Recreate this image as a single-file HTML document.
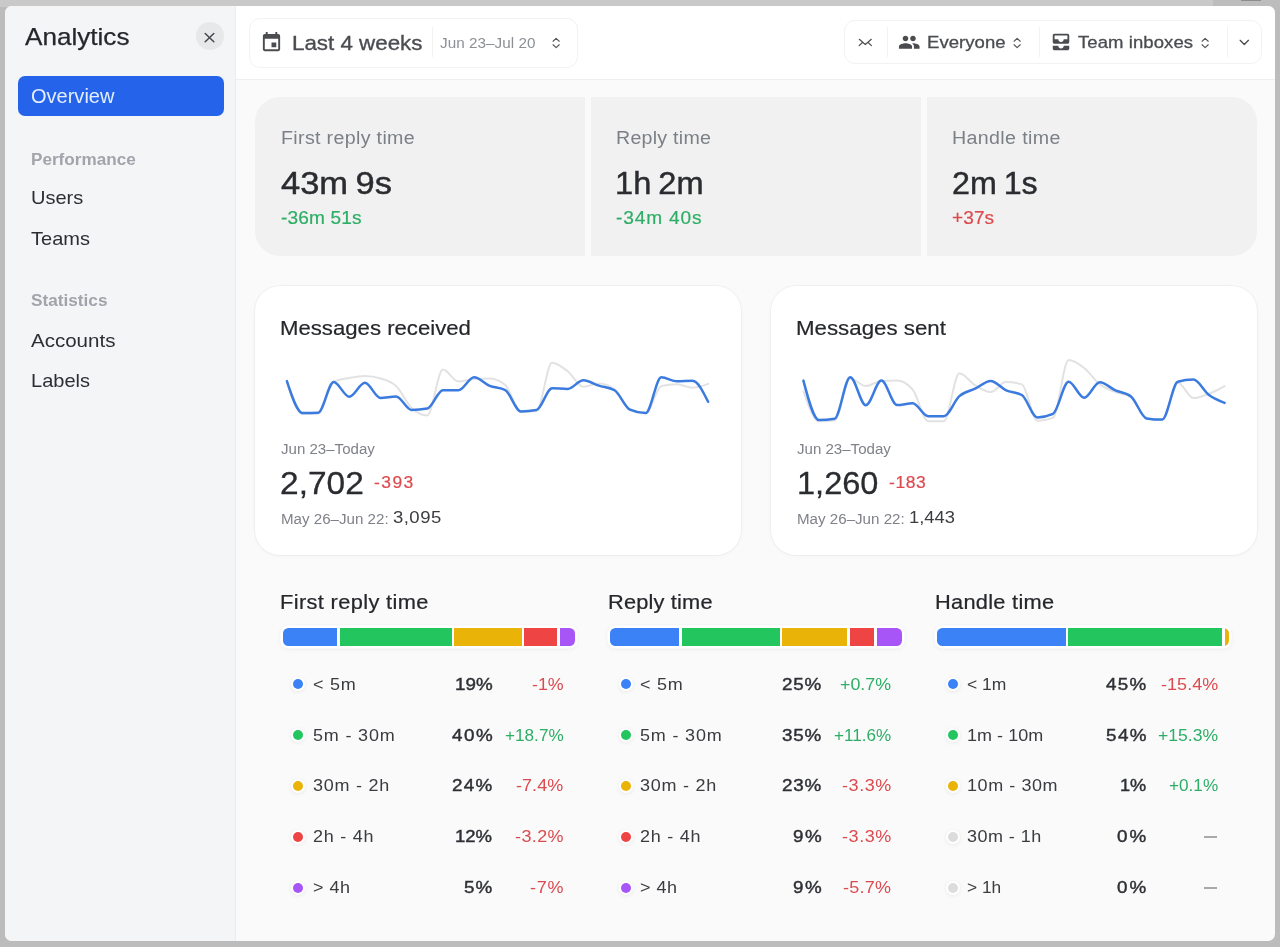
<!DOCTYPE html>
<html lang="en"><head><meta charset="utf-8"><title>Analytics</title>
<style>
*{box-sizing:border-box}
html,body{margin:0;padding:0}
body{width:1280px;height:947px;overflow:hidden;position:relative;background:#bcbcbc;font-family:"Liberation Sans", Arial, sans-serif;-webkit-font-smoothing:antialiased}
.topband{position:absolute;left:0;top:0;width:1280px;height:7px;background:#c9c9c9}
.topband i{position:absolute;left:1213px;top:0;width:67px;height:7px;background:#bdbdbd}
.topband b{position:absolute;left:1241px;top:0;width:20px;height:1px;background:#8d8d8d}
.window{position:absolute;left:5px;top:6px;width:1270px;height:935px;border-radius:7px;overflow:hidden;background:#fafafa;will-change:transform}
.abs,.t,.chart,.ud,svg.ic{position:absolute}
.t{white-space:pre;line-height:1;transform-origin:0 0;margin:0;font-weight:400;text-decoration:none;display:block}
.sidebar{position:absolute;left:0;top:0;width:231px;height:935px;background:#f4f5f7;border-right:1px solid #ececee}
.close{position:absolute;left:190.5px;top:16px;width:28px;height:28px;border-radius:50%;background:#e7e8ea}
.navsel{position:absolute;left:13px;top:70px;width:206px;height:40px;border-radius:7px;background:#2563eb}
.header{position:absolute;left:231px;top:0;width:1039px;height:74px;background:#fff;border-bottom:1px solid #efefef}
.pill{position:absolute;border:1px solid #f2f2f2;border-radius:11px;background:#fff}
.vr{position:absolute;width:1px;background:#f2f2f2}
.card{position:absolute;top:91px;width:330px;height:159px;background:#f1f1f1}
.panel{position:absolute;top:280px;width:486px;height:269px;border-radius:25px;background:#fff;box-shadow:0 0 0 1px rgba(0,0,0,.03),0 1px 4px rgba(0,0,0,.03)}
.col{position:absolute;top:570px;width:300px;height:360px}
.bar{position:absolute;top:52px;height:18px;width:292px;display:flex;gap:2.7px;border-radius:5.5px;overflow:hidden;box-shadow:0 0 0 2.5px #fff,0 1px 5px 2.5px rgba(0,0,0,.055);background:#fff}
.bar i{display:block;height:100%}
.dot{position:absolute;width:10px;height:10px;border-radius:50%;box-shadow:0 0 0 2px #fff,0 1px 4px 2px rgba(0,0,0,.07)}
.dash{position:absolute;width:13px;height:1.5px;background:#a9a9a9}
</style></head><body>
<div class="topband"><i></i><b></b></div>
<div class="window">

<aside class="sidebar">
<h1 class="t" style="left:20.3px;top:19.3px;font-size:24px;color:#25272b;-webkit-text-stroke:0.25px #25272b;transform:scaleX(1.088);">Analytics</h1>
<div class="close" role="button" aria-label="Close"><svg class="ic" style="left:8.6px;top:9.5px" width="11" height="11" viewBox="0 0 11 11"><path d="M1.2 1.5 9.8 9.7M9.8 1.5 1.2 9.7" stroke="#45474c" stroke-width="1.5" stroke-linecap="round"/></svg></div>
<nav><div class="navsel"></div>
<a class="t nav" style="left:25.7px;top:81.1px;font-size:19.3px;color:#e3efff;transform:scaleX(1.038);">Overview</a>
<h2 class="t sec" style="left:26.1px;top:145.6px;font-size:16px;color:#a1a4aa;font-weight:700;transform:scaleX(1.070);">Performance</h2>
<a class="t nav" style="left:26.0px;top:182.3px;font-size:19px;color:#2c2e33;transform:scaleX(1.054);">Users</a>
<a class="t nav" style="left:26.0px;top:222.9px;font-size:19px;color:#2c2e33;transform:scaleX(1.054);">Teams</a>
<h2 class="t sec" style="left:26.1px;top:287.1px;font-size:16px;color:#a1a4aa;font-weight:700;transform:scaleX(1.075);">Statistics</h2>
<a class="t nav" style="left:26.0px;top:324.5px;font-size:19px;color:#2c2e33;transform:scaleX(1.080);">Accounts</a>
<a class="t nav" style="left:26.0px;top:365.0px;font-size:19px;color:#2c2e33;transform:scaleX(1.054);">Labels</a>
</nav></aside>
<header class="header">
<div class="pill" style="left:13px;top:12px;width:329px;height:50px"></div>
<div class="pill" style="left:608px;top:14px;width:418px;height:44px"></div>
<div class="vr" style="left:196px;top:21px;height:30px"></div>
<div class="vr" style="left:651px;top:21px;height:30px"></div>
<div class="vr" style="left:803px;top:21px;height:30px"></div>
<div class="vr" style="left:991px;top:21px;height:30px"></div>
<svg class="ic" style="left:23.9px;top:25.0px" width="23" height="23" viewBox="0 0 24 24"><path fill="#4a4c50" d="M17 12h-5v5h5v-5zM16 1v2H8V1H6v2H5c-1.11 0-1.99.9-1.99 2L3 19c0 1.1.89 2 2 2h14c1.1 0 2-.9 2-2V5c0-1.1-.9-2-2-2h-1V1h-2zm3 18H5V8h14v11z"/></svg>
<svg class="ud" style="left:315.8px;top:30.5px" width="8.3" height="12" viewBox="0 0 9 13"><path d="M1.2 4.6 4.5 1.4 7.8 4.6M1.2 8.4 4.5 11.6 7.8 8.4" fill="none" stroke="#55575b" stroke-width="1.25" stroke-linecap="round" stroke-linejoin="round"/></svg>
<svg class="ic" style="left:622.3px;top:31.9px" width="14.6" height="9.1" viewBox="0 0 16 10"><path d="M1.4 1.4 8 7.2 14.6 1.4M1.2 8.4 4.6 5.2M14.8 8.4 11.4 5.2" fill="none" stroke="#4a4c50" stroke-width="1.25" stroke-linecap="round" stroke-linejoin="round"/></svg>
<svg class="ic" style="left:662.4px;top:25.3px" width="22.5" height="22.5" viewBox="0 0 24 24"><path fill="#4a4c50" d="M16 11c1.66 0 2.99-1.34 2.99-3S17.66 5 16 5c-1.66 0-3 1.34-3 3s1.34 3 3 3zm-8 0c1.66 0 2.99-1.34 2.99-3S9.660 5 8 5C6.340 5 5 6.340 5 8s1.340 3 3 3zm0 2c-2.330 0-7 1.170-7 3.500V19h14v-2.500c0-2.330-4.670-3.500-7-3.500zm8 0c-.29 0-.62.020-.97.050 1.160.84 1.970 1.970 1.970 3.450V19h6v-2.500c0-2.330-4.670-3.500-7-3.500z"/></svg>
<svg class="ud" style="left:776.8px;top:30.6px" width="8.3" height="12" viewBox="0 0 9 13"><path d="M1.2 4.6 4.5 1.4 7.8 4.6M1.2 8.4 4.5 11.6 7.8 8.4" fill="none" stroke="#55575b" stroke-width="1.25" stroke-linecap="round" stroke-linejoin="round"/></svg>
<svg class="ic" style="left:813.8px;top:25.3px" width="22" height="22" viewBox="0 0 24 24"><path fill="#4a4c50" d="M19 3H5c-1.1 0-2 .9-2 2v7c0 1.1.9 2 2 2h14c1.1 0 2-.9 2-2V5c0-1.1-.9-2-2-2zm0 6h-4c0 1.62-1.38 3-3 3s-3-1.38-3-3H5V5h14v4zm-4 7h6v3c0 1.1-.9 2-2 2H5c-1.1 0-2-.9-2-2v-3h6c0 1.66 1.34 3 3 3s3-1.340 3-3z"/></svg>
<svg class="ud" style="left:964.6px;top:30.7px" width="8.3" height="12" viewBox="0 0 9 13"><path d="M1.2 4.6 4.5 1.4 7.8 4.6M1.2 8.4 4.5 11.6 7.8 8.4" fill="none" stroke="#55575b" stroke-width="1.25" stroke-linecap="round" stroke-linejoin="round"/></svg>
<svg class="ic" style="left:1003.2px;top:33.2px" width="10.6" height="7.1" viewBox="0 0 12 8"><path d="M1.3 1.5 6 6.2 10.700 1.500" fill="none" stroke="#4a4c50" stroke-width="1.500" stroke-linecap="round" stroke-linejoin="round"/></svg>
<span class="t" style="left:56.1px;top:26.2px;font-size:21px;color:#4a4c50;-webkit-text-stroke:0.35px #4a4c50;transform:scaleX(1.064);">Last 4 weeks</span>
<span class="t" style="left:203.7px;top:30.2px;font-size:14px;color:#8c8f94;letter-spacing:0.03px;transform:scaleX(1.090);">Jun 23–Jul 20</span>
<span class="t" style="left:691.3px;top:28.2px;font-size:17px;color:#4a4c50;letter-spacing:0.04px;-webkit-text-stroke:0.3px #4a4c50;transform:scaleX(1.090);">Everyone</span>
<span class="t" style="left:842.4px;top:28.2px;font-size:17px;color:#4a4c50;letter-spacing:0.06px;-webkit-text-stroke:0.3px #4a4c50;transform:scaleX(1.090);">Team inboxes</span>
</header>
<section>
<div class="card" style="left:250px;border-radius:25px 0 0 25px;">
<h3 class="t" style="left:25.8px;top:31.6px;font-size:18px;color:#7b7f86;letter-spacing:0.31px;transform:scaleX(1.090);">First reply time</h3>
<span class="t" style="left:26.2px;top:69.6px;font-size:32px;color:#2a2c30;word-spacing:-2px;-webkit-text-stroke:0.45px #2a2c30;transform:scaleX(1.078);">43m 9s</span>
<span class="t" style="left:26.4px;top:113.0px;font-size:17.5px;color:#2dae66;letter-spacing:0.15px;-webkit-text-stroke:0.2px #2dae66;transform:scaleX(1.090);">-36m 51s</span>
</div>
<div class="card" style="left:586px;">
<h3 class="t" style="left:24.8px;top:31.6px;font-size:18px;color:#7b7f86;letter-spacing:0.23px;transform:scaleX(1.090);">Reply time</h3>
<span class="t" style="left:23.8px;top:69.6px;font-size:32px;color:#2a2c30;word-spacing:-2px;-webkit-text-stroke:0.45px #2a2c30;transform:scaleX(1.019);">1h 2m</span>
<span class="t" style="left:25.4px;top:113.0px;font-size:17.5px;color:#2dae66;letter-spacing:0.79px;-webkit-text-stroke:0.2px #2dae66;transform:scaleX(1.090);">-34m 40s</span>
</div>
<div class="card" style="left:922px;border-radius:0 25px 25px 0;">
<h3 class="t" style="left:24.8px;top:31.6px;font-size:18px;color:#7b7f86;letter-spacing:0.33px;transform:scaleX(1.090);">Handle time</h3>
<span class="t" style="left:24.6px;top:69.6px;font-size:32px;color:#2a2c30;word-spacing:-2px;-webkit-text-stroke:0.45px #2a2c30;transform:scaleX(1.007);">2m 1s</span>
<span class="t" style="left:25.4px;top:113.0px;font-size:17.5px;color:#dc4a4e;letter-spacing:0.07px;-webkit-text-stroke:0.2px #dc4a4e;transform:scaleX(1.090);">+37s</span>
</div>
</section>
<section>
<div class="panel" style="left:250px">
<svg class="chart" style="left:0;top:54px" width="486" height="100" viewBox="0 0 486 100"><path d="M31.9 42.0C37.1 58.0 42.3 74.0 47.5 74.0C52.7 74.0 57.9 73.8 63.1 73.5C68.3 73.2 73.5 44.7 78.7 42.0C83.9 39.3 89.1 39.0 94.3 38.0C99.5 37.0 104.7 36.0 109.9 36.0C115.1 36.0 120.3 36.8 125.5 38.5C130.7 40.2 135.9 41.1 141.1 46.0C146.3 50.9 151.5 63.1 156.7 68.0C161.9 72.9 167.1 75.5 172.3 75.5C177.5 75.5 182.7 29.6 187.9 29.6C193.1 29.6 198.3 41.6 203.5 41.6C208.7 41.6 213.9 39.3 219.1 39.0C224.3 38.7 229.5 38.5 234.7 38.5C239.9 38.5 245.1 40.7 250.3 45.0C255.5 49.3 260.7 72.0 265.9 72.0C271.1 72.0 276.3 71.7 281.5 71.0C286.7 70.3 291.9 22.7 297.1 22.7C302.3 22.7 307.5 27.3 312.7 31.3C317.9 35.3 323.1 46.8 328.3 46.8C333.5 46.8 338.7 43.4 343.9 43.4C349.1 43.4 354.3 45.4 359.5 49.4C364.7 53.4 369.9 68.2 375.1 70.3C380.3 72.4 385.5 73.4 390.7 73.4C395.9 73.4 401.1 47.2 406.3 46.0C411.5 44.8 416.7 44.2 421.9 44.2C427.1 44.2 432.3 47.7 437.5 47.7C442.7 47.7 447.9 45.8 453.1 43.9" fill="none" stroke="#e2e2e2" stroke-width="2" stroke-linecap="round" stroke-linejoin="round"/><path d="M31.9 41.1C37.1 57.1 42.3 73.0 47.5 73.0C52.7 73.0 57.9 72.9 63.1 72.7C68.3 72.5 73.5 42.0 78.7 42.0C83.9 42.0 89.1 56.8 94.3 56.8C99.5 56.8 104.7 42.8 109.9 42.8C115.1 42.8 120.3 58.0 125.5 58.0C130.7 58.0 135.9 56.4 141.1 56.4C146.3 56.4 151.5 70.0 156.7 70.0C161.9 70.0 167.1 69.5 172.3 68.6C177.5 67.7 182.7 50.2 187.9 50.2C193.1 50.2 198.3 50.2 203.5 50.2C208.7 50.2 213.9 37.3 219.1 37.3C224.3 37.3 229.5 43.7 234.7 45.9C239.9 48.0 245.1 47.3 250.3 50.2C255.5 53.1 260.7 71.4 265.9 71.4C271.1 71.4 276.3 70.9 281.5 70.0C286.7 69.1 291.9 48.2 297.1 48.2C302.3 48.2 307.5 48.9 312.7 48.9C317.9 48.9 323.1 40.3 328.3 40.3C333.5 40.3 338.7 44.0 343.9 45.6C349.1 47.3 354.3 47.1 359.5 50.2C364.7 53.3 369.9 67.4 375.1 69.7C380.3 72.0 385.5 73.1 390.7 73.1C395.9 73.1 401.1 37.3 406.3 37.3C411.5 37.3 416.7 41.3 421.9 41.3C427.1 41.3 432.3 40.8 437.5 40.8C442.7 40.8 447.9 51.3 453.1 61.8" fill="none" stroke="#3b7be0" stroke-width="2.5" stroke-linecap="round" stroke-linejoin="round"/></svg>
<h2 class="t" style="left:25.4px;top:32.3px;font-size:20.5px;color:#25272b;-webkit-text-stroke:0.2px #25272b;transform:scaleX(1.081);">Messages received</h2>
<span class="t" style="left:25.7px;top:155.9px;font-size:14px;color:#7f8288;transform:scaleX(1.076);">Jun 23–Today</span>
<span class="t" style="left:25.0px;top:180.6px;font-size:32px;color:#2a2c30;-webkit-text-stroke:0.3px #2a2c30;transform:scaleX(1.047);">2,702</span>
<span class="t" style="left:119.1px;top:188.5px;font-size:16px;color:#dc4a4e;letter-spacing:1.35px;-webkit-text-stroke:0.2px #dc4a4e;transform:scaleX(1.090);">-393</span>
<span class="t" style="left:25.7px;top:225.5px;font-size:14px;color:#7f8288;transform:scaleX(1.080);">May 26–Jun 22:</span>
<span class="t" style="left:137.8px;top:223.0px;font-size:17px;color:#3a3c40;letter-spacing:0.42px;transform:scaleX(1.090);">3,095</span>
</div>
<div class="panel" style="left:766px">
<svg class="chart" style="left:0;top:54px" width="486" height="100" viewBox="0 0 486 100"><path d="M32.4 51.2C37.6 66.2 42.8 81.3 48.0 81.3C53.2 81.3 58.4 81.0 63.6 80.5C68.8 80.0 74.0 38.4 79.2 38.4C84.4 38.4 89.6 46.1 94.8 46.1C100.0 46.1 105.2 41.1 110.4 40.9C115.6 40.7 120.8 40.6 126.0 40.6C131.2 40.6 136.4 43.6 141.6 49.5C146.8 55.4 152.0 81.3 157.2 81.3C162.4 81.3 167.6 81.3 172.8 81.3C178.0 81.3 183.2 33.2 188.4 33.2C193.6 33.2 198.8 42.0 204.0 45.2C209.2 48.3 214.4 52.1 219.6 52.1C224.8 52.1 230.0 41.8 235.2 41.8C240.4 41.8 245.6 42.7 250.8 44.4C256.0 46.1 261.2 80.8 266.4 80.8C271.6 80.8 276.8 79.8 282.0 77.9C287.2 76.0 292.4 20.0 297.6 20.0C302.8 20.0 308.0 23.9 313.2 28.0C318.4 32.1 323.6 40.4 328.8 44.4C334.0 48.4 339.2 50.0 344.4 52.1C349.6 54.3 354.8 53.8 360.0 57.3C365.2 60.8 370.4 77.8 375.6 78.7C380.8 79.6 386.0 80.1 391.2 80.1C396.4 80.1 401.6 42.7 406.8 42.7C412.0 42.7 417.2 58.1 422.4 58.1C427.6 58.1 432.8 55.8 438.0 53.8C443.2 51.8 448.4 49.0 453.6 46.1" fill="none" stroke="#e2e2e2" stroke-width="2" stroke-linecap="round" stroke-linejoin="round"/><path d="M32.4 40.6C37.6 60.4 42.8 80.1 48.0 80.1C53.2 80.1 58.4 79.6 63.6 78.7C68.8 77.8 74.0 37.2 79.2 37.2C84.4 37.2 89.6 65.3 94.8 65.3C100.0 65.3 105.2 40.6 110.4 40.6C115.6 40.6 120.8 65.0 126.0 65.0C131.2 65.0 136.4 63.3 141.6 63.3C146.8 63.3 152.0 76.2 157.2 76.2C162.4 76.2 167.6 76.2 172.8 76.2C178.0 76.2 183.2 60.7 188.4 56.1C193.6 51.5 198.8 51.2 204.0 48.7C209.2 46.2 214.4 40.9 219.6 40.9C224.8 40.9 230.0 48.0 235.2 50.4C240.4 52.7 245.6 51.9 250.8 55.0C256.0 58.1 261.2 77.4 266.4 77.4C271.6 77.4 276.8 76.2 282.0 73.9C287.2 71.6 292.4 41.8 297.6 41.8C302.8 41.8 308.0 57.8 313.2 57.8C318.4 57.8 323.6 42.3 328.8 42.3C334.0 42.3 339.2 48.0 344.4 50.4C349.6 52.7 354.8 52.4 360.0 56.4C365.2 60.4 370.4 77.6 375.6 78.4C380.8 79.2 386.0 79.6 391.2 79.6C396.4 79.6 401.6 43.3 406.8 41.8C412.0 40.3 417.2 39.6 422.4 39.6C427.6 39.6 432.8 51.1 438.0 55.0C443.2 58.9 448.4 60.9 453.6 62.9" fill="none" stroke="#3b7be0" stroke-width="2.5" stroke-linecap="round" stroke-linejoin="round"/></svg>
<h2 class="t" style="left:25.4px;top:32.3px;font-size:20.5px;color:#25272b;-webkit-text-stroke:0.2px #25272b;transform:scaleX(1.087);">Messages sent</h2>
<span class="t" style="left:25.7px;top:155.9px;font-size:14px;color:#7f8288;transform:scaleX(1.076);">Jun 23–Today</span>
<span class="t" style="left:25.8px;top:180.6px;font-size:32px;color:#2a2c30;-webkit-text-stroke:0.3px #2a2c30;transform:scaleX(1.017);">1,260</span>
<span class="t" style="left:117.6px;top:188.5px;font-size:16px;color:#dc4a4e;letter-spacing:0.58px;-webkit-text-stroke:0.2px #dc4a4e;transform:scaleX(1.090);">-183</span>
<span class="t" style="left:25.7px;top:225.5px;font-size:14px;color:#7f8288;transform:scaleX(1.081);">May 26–Jun 22:</span>
<span class="t" style="left:138.0px;top:223.0px;font-size:17px;color:#3a3c40;transform:scaleX(1.078);">1,443</span>
</div>
</section>
<section>
<div class="col" style="left:270.3px">
<div class="bar" style="left:7.4px"><i style="background:#3b82f6;flex:54.6 1 0"></i><i style="background:#22c55e;flex:112.25 1 0"></i><i style="background:#eab308;flex:67.5 1 0"></i><i style="background:#ef4444;flex:32.75 1 0"></i><i style="background:#a855f7;flex:15 1 0"></i></div>
<i class="dot" style="left:18.0px;top:103.3px;background:#3b82f6"></i>
<i class="dot" style="left:18.0px;top:154.3px;background:#22c55e"></i>
<i class="dot" style="left:18.0px;top:205.1px;background:#eab308"></i>
<i class="dot" style="left:18.0px;top:255.9px;background:#ef4444"></i>
<i class="dot" style="left:18.0px;top:306.9px;background:#a855f7"></i>
<h2 class="t" style="left:5.1px;top:15.9px;font-size:20px;color:#25272b;letter-spacing:0.33px;-webkit-text-stroke:0.22px #25272b;transform:scaleX(1.090);">First reply time</h2>
<div class="row">
<span class="t" style="left:37.7px;top:99.5px;font-size:16.5px;color:#3a3c40;letter-spacing:0.69px;transform:scaleX(1.090);">&lt; 5m</span>
<b class="t" style="left:179.4px;top:99.5px;font-size:16.5px;color:#2e3035;letter-spacing:0.07px;-webkit-text-stroke:0.42px #2e3035;transform:scaleX(1.140);">19%</b>
<span class="t" style="left:256.7px;top:99.5px;font-size:16.5px;color:#dc4a4e;transform:scaleX(1.082);">-1%</span>
</div>
<div class="row">
<span class="t" style="left:37.7px;top:150.5px;font-size:16.5px;color:#3a3c40;letter-spacing:0.76px;transform:scaleX(1.090);">5m - 30m</span>
<b class="t" style="left:176.4px;top:150.5px;font-size:16.5px;color:#2e3035;letter-spacing:1.39px;-webkit-text-stroke:0.42px #2e3035;transform:scaleX(1.140);">40%</b>
<span class="t" style="left:229.7px;top:150.5px;font-size:16.5px;color:#2dae66;transform:scaleX(1.040);">+18.7%</span>
</div>
<div class="row">
<span class="t" style="left:37.7px;top:201.3px;font-size:16.5px;color:#3a3c40;letter-spacing:0.69px;transform:scaleX(1.090);">30m - 2h</span>
<b class="t" style="left:176.9px;top:201.3px;font-size:16.5px;color:#2e3035;letter-spacing:1.17px;-webkit-text-stroke:0.42px #2e3035;transform:scaleX(1.140);">24%</b>
<span class="t" style="left:241.2px;top:201.3px;font-size:16.5px;color:#dc4a4e;letter-spacing:0.06px;transform:scaleX(1.090);">-7.4%</span>
</div>
<div class="row">
<span class="t" style="left:37.7px;top:252.1px;font-size:16.5px;color:#3a3c40;letter-spacing:0.70px;transform:scaleX(1.090);">2h - 4h</span>
<b class="t" style="left:180.2px;top:252.1px;font-size:16.5px;color:#2e3035;-webkit-text-stroke:0.42px #2e3035;transform:scaleX(1.123);">12%</b>
<span class="t" style="left:239.9px;top:252.1px;font-size:16.5px;color:#dc4a4e;letter-spacing:0.36px;transform:scaleX(1.090);">-3.2%</span>
</div>
<div class="row">
<span class="t" style="left:37.7px;top:303.1px;font-size:16.5px;color:#3a3c40;letter-spacing:0.47px;transform:scaleX(1.090);">&gt; 4h</span>
<b class="t" style="left:188.9px;top:303.1px;font-size:16.5px;color:#2e3035;letter-spacing:0.98px;-webkit-text-stroke:0.42px #2e3035;transform:scaleX(1.140);">5%</b>
<span class="t" style="left:254.9px;top:303.1px;font-size:16.5px;color:#dc4a4e;letter-spacing:0.72px;transform:scaleX(1.090);">-7%</span>
</div>
</div>
<div class="col" style="left:597.5px">
<div class="bar" style="left:7.4px"><i style="background:#3b82f6;flex:68.75 1 0"></i><i style="background:#22c55e;flex:97.25 1 0"></i><i style="background:#eab308;flex:64 1 0"></i><i style="background:#ef4444;flex:24.5 1 0"></i><i style="background:#a855f7;flex:24.75 1 0"></i></div>
<i class="dot" style="left:18.0px;top:103.3px;background:#3b82f6"></i>
<i class="dot" style="left:18.0px;top:154.3px;background:#22c55e"></i>
<i class="dot" style="left:18.0px;top:205.1px;background:#eab308"></i>
<i class="dot" style="left:18.0px;top:255.9px;background:#ef4444"></i>
<i class="dot" style="left:18.0px;top:306.9px;background:#a855f7"></i>
<h2 class="t" style="left:5.1px;top:15.9px;font-size:20px;color:#25272b;letter-spacing:0.16px;-webkit-text-stroke:0.22px #25272b;transform:scaleX(1.090);">Reply time</h2>
<div class="row">
<span class="t" style="left:37.7px;top:99.5px;font-size:16.5px;color:#3a3c40;letter-spacing:0.69px;transform:scaleX(1.090);">&lt; 5m</span>
<b class="t" style="left:179.7px;top:99.5px;font-size:16.5px;color:#2e3035;letter-spacing:0.73px;-webkit-text-stroke:0.42px #2e3035;transform:scaleX(1.140);">25%</b>
<span class="t" style="left:237.4px;top:99.5px;font-size:16.5px;color:#2dae66;transform:scaleX(1.080);">+0.7%</span>
</div>
<div class="row">
<span class="t" style="left:37.7px;top:150.5px;font-size:16.5px;color:#3a3c40;letter-spacing:0.76px;transform:scaleX(1.090);">5m - 30m</span>
<b class="t" style="left:179.7px;top:150.5px;font-size:16.5px;color:#2e3035;letter-spacing:0.73px;-webkit-text-stroke:0.42px #2e3035;transform:scaleX(1.140);">35%</b>
<span class="t" style="left:231.2px;top:150.5px;font-size:16.5px;color:#2dae66;transform:scaleX(1.036);">+11.6%</span>
</div>
<div class="row">
<span class="t" style="left:37.7px;top:201.3px;font-size:16.5px;color:#3a3c40;letter-spacing:0.69px;transform:scaleX(1.090);">30m - 2h</span>
<b class="t" style="left:179.7px;top:201.3px;font-size:16.5px;color:#2e3035;letter-spacing:0.73px;-webkit-text-stroke:0.42px #2e3035;transform:scaleX(1.140);">23%</b>
<span class="t" style="left:239.2px;top:201.3px;font-size:16.5px;color:#dc4a4e;letter-spacing:0.52px;transform:scaleX(1.090);">-3.3%</span>
</div>
<div class="row">
<span class="t" style="left:37.7px;top:252.1px;font-size:16.5px;color:#3a3c40;letter-spacing:0.70px;transform:scaleX(1.090);">2h - 4h</span>
<b class="t" style="left:190.2px;top:252.1px;font-size:16.5px;color:#2e3035;letter-spacing:1.42px;-webkit-text-stroke:0.42px #2e3035;transform:scaleX(1.140);">9%</b>
<span class="t" style="left:239.2px;top:252.1px;font-size:16.5px;color:#dc4a4e;letter-spacing:0.52px;transform:scaleX(1.090);">-3.3%</span>
</div>
<div class="row">
<span class="t" style="left:37.7px;top:303.1px;font-size:16.5px;color:#3a3c40;letter-spacing:0.47px;transform:scaleX(1.090);">&gt; 4h</span>
<b class="t" style="left:190.2px;top:303.1px;font-size:16.5px;color:#2e3035;letter-spacing:1.42px;-webkit-text-stroke:0.42px #2e3035;transform:scaleX(1.140);">9%</b>
<span class="t" style="left:240.4px;top:303.1px;font-size:16.5px;color:#dc4a4e;letter-spacing:0.25px;transform:scaleX(1.090);">-5.7%</span>
</div>
</div>
<div class="col" style="left:924.7px">
<div class="bar" style="left:7.4px"><i style="background:#3b82f6;flex:128.75 1 0"></i><i style="background:#22c55e;flex:153.5 1 0"></i><i style="background:#eab308;flex:4.5 1 0"></i></div>
<i class="dot" style="left:18.0px;top:103.3px;background:#3b82f6"></i>
<i class="dot" style="left:18.0px;top:154.3px;background:#22c55e"></i>
<i class="dot" style="left:18.0px;top:205.1px;background:#eab308"></i>
<i class="dot" style="left:18.0px;top:255.9px;background:#dcdcdc"></i>
<i class="dash" style="left:274.5px;top:260.2px"></i>
<i class="dot" style="left:18.0px;top:306.9px;background:#dcdcdc"></i>
<i class="dash" style="left:274.5px;top:311.2px"></i>
<h2 class="t" style="left:5.1px;top:15.9px;font-size:20px;color:#25272b;letter-spacing:0.25px;-webkit-text-stroke:0.22px #25272b;transform:scaleX(1.090);">Handle time</h2>
<div class="row">
<span class="t" style="left:37.7px;top:99.5px;font-size:16.5px;color:#3a3c40;transform:scaleX(1.061);">&lt; 1m</span>
<b class="t" style="left:176.3px;top:99.5px;font-size:16.5px;color:#2e3035;letter-spacing:1.08px;-webkit-text-stroke:0.42px #2e3035;transform:scaleX(1.140);">45%</b>
<span class="t" style="left:231.2px;top:99.5px;font-size:16.5px;color:#dc4a4e;letter-spacing:0.05px;transform:scaleX(1.090);">-15.4%</span>
</div>
<div class="row">
<span class="t" style="left:37.7px;top:150.5px;font-size:16.5px;color:#3a3c40;letter-spacing:0.04px;transform:scaleX(1.090);">1m - 10m</span>
<b class="t" style="left:175.9px;top:150.5px;font-size:16.5px;color:#2e3035;letter-spacing:1.25px;-webkit-text-stroke:0.42px #2e3035;transform:scaleX(1.140);">54%</b>
<span class="t" style="left:228.4px;top:150.5px;font-size:16.5px;color:#2dae66;transform:scaleX(1.064);">+15.3%</span>
</div>
<div class="row">
<span class="t" style="left:37.7px;top:201.3px;font-size:16.5px;color:#3a3c40;letter-spacing:0.53px;transform:scaleX(1.090);">10m - 30m</span>
<b class="t" style="left:190.2px;top:201.3px;font-size:16.5px;color:#2e3035;-webkit-text-stroke:0.42px #2e3035;transform:scaleX(1.101);">1%</b>
<span class="t" style="left:239.2px;top:201.3px;font-size:16.5px;color:#2dae66;transform:scaleX(1.041);">+0.1%</span>
</div>
<div class="row">
<span class="t" style="left:37.7px;top:252.1px;font-size:16.5px;color:#3a3c40;letter-spacing:0.43px;transform:scaleX(1.090);">30m - 1h</span>
<b class="t" style="left:187.1px;top:252.1px;font-size:16.5px;color:#2e3035;letter-spacing:1.86px;-webkit-text-stroke:0.42px #2e3035;transform:scaleX(1.140);">0%</b>
</div>
<div class="row">
<span class="t" style="left:37.7px;top:303.1px;font-size:16.5px;color:#3a3c40;transform:scaleX(1.050);">&gt; 1h</span>
<b class="t" style="left:187.1px;top:303.1px;font-size:16.5px;color:#2e3035;letter-spacing:1.86px;-webkit-text-stroke:0.42px #2e3035;transform:scaleX(1.140);">0%</b>
</div>
</div>
</section>
</div></body></html>
